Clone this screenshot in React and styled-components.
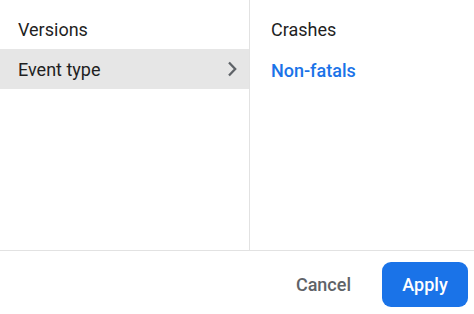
import React from "react";
import styled, { createGlobalStyle } from "styled-components";

const Global = createGlobalStyle`
  html, body { margin: 0; padding: 0; background: #fff; }
  body { font-family: Roboto, "Noto Sans", Arial, sans-serif; }
  * { box-sizing: border-box; }
`;

const Dialog = styled.div`
  width: 474px;
  height: 314px;
  display: flex;
  flex-direction: column;
  background: #fff;
`;

const Body = styled.div`
  display: flex;
  height: 251px;
  border-bottom: 1px solid #e2e2e2;
`;

const LeftPane = styled.div`
  width: 250px;
  border-right: 1px solid #e2e2e2;
  padding: 9px 0 0 0;
  display: flex;
  flex-direction: column;
`;

const RightPane = styled.div`
  flex: 1;
  padding: 9px 0 0 21px;
  display: flex;
  flex-direction: column;
`;

const MenuRow = styled.div`
  height: 40px;
  display: flex;
  align-items: center;
  justify-content: space-between;
  padding: 0 11px 0 18px;
  font-size: 18px;
  color: #1f1f1f;
  background: ${(p) => (p.$active ? "#e6e6e6" : "transparent")};
`;

const Option = styled.div`
  height: 41px;
  display: flex;
  align-items: center;
  font-size: 18px;
  font-weight: ${(p) => (p.$selected ? 500 : 400)};
  color: ${(p) => (p.$selected ? "#1a73e8" : "#1f1f1f")};
`;

const Footer = styled.div`
  flex: 1;
  display: flex;
  justify-content: flex-end;
  align-items: flex-start;
  gap: 31px;
  padding: 11px 6px 0 0;
`;

const TextButton = styled.button`
  height: 45px;
  border: none;
  background: transparent;
  font-family: inherit;
  font-size: 18px;
  font-weight: 500;
  color: #5f6368;
  padding: 0;
`;

const PrimaryButton = styled.button`
  width: 86px;
  height: 45px;
  border: none;
  border-radius: 9px;
  background: #1a73e8;
  color: #fff;
  font-family: inherit;
  font-size: 18px;
  font-weight: 500;
  padding: 0;
`;

const Chevron = () => (
  <svg width="12" height="16" viewBox="0 0 12 16">
    <path d="M3 1.5 L9.2 8 L3 14.5" fill="none" stroke="#5f6368" strokeWidth="2.3" />
  </svg>
);

export default function App() {
  return (
    <>
      <Global />
      <Dialog>
        <Body>
          <LeftPane>
            <MenuRow>Versions</MenuRow>
            <MenuRow $active>
              <span>Event type</span>
              <Chevron />
            </MenuRow>
          </LeftPane>
          <RightPane>
            <Option>Crashes</Option>
            <Option $selected>Non-fatals</Option>
          </RightPane>
        </Body>
        <Footer>
          <TextButton>Cancel</TextButton>
          <PrimaryButton>Apply</PrimaryButton>
        </Footer>
      </Dialog>
    </>
  );
}
